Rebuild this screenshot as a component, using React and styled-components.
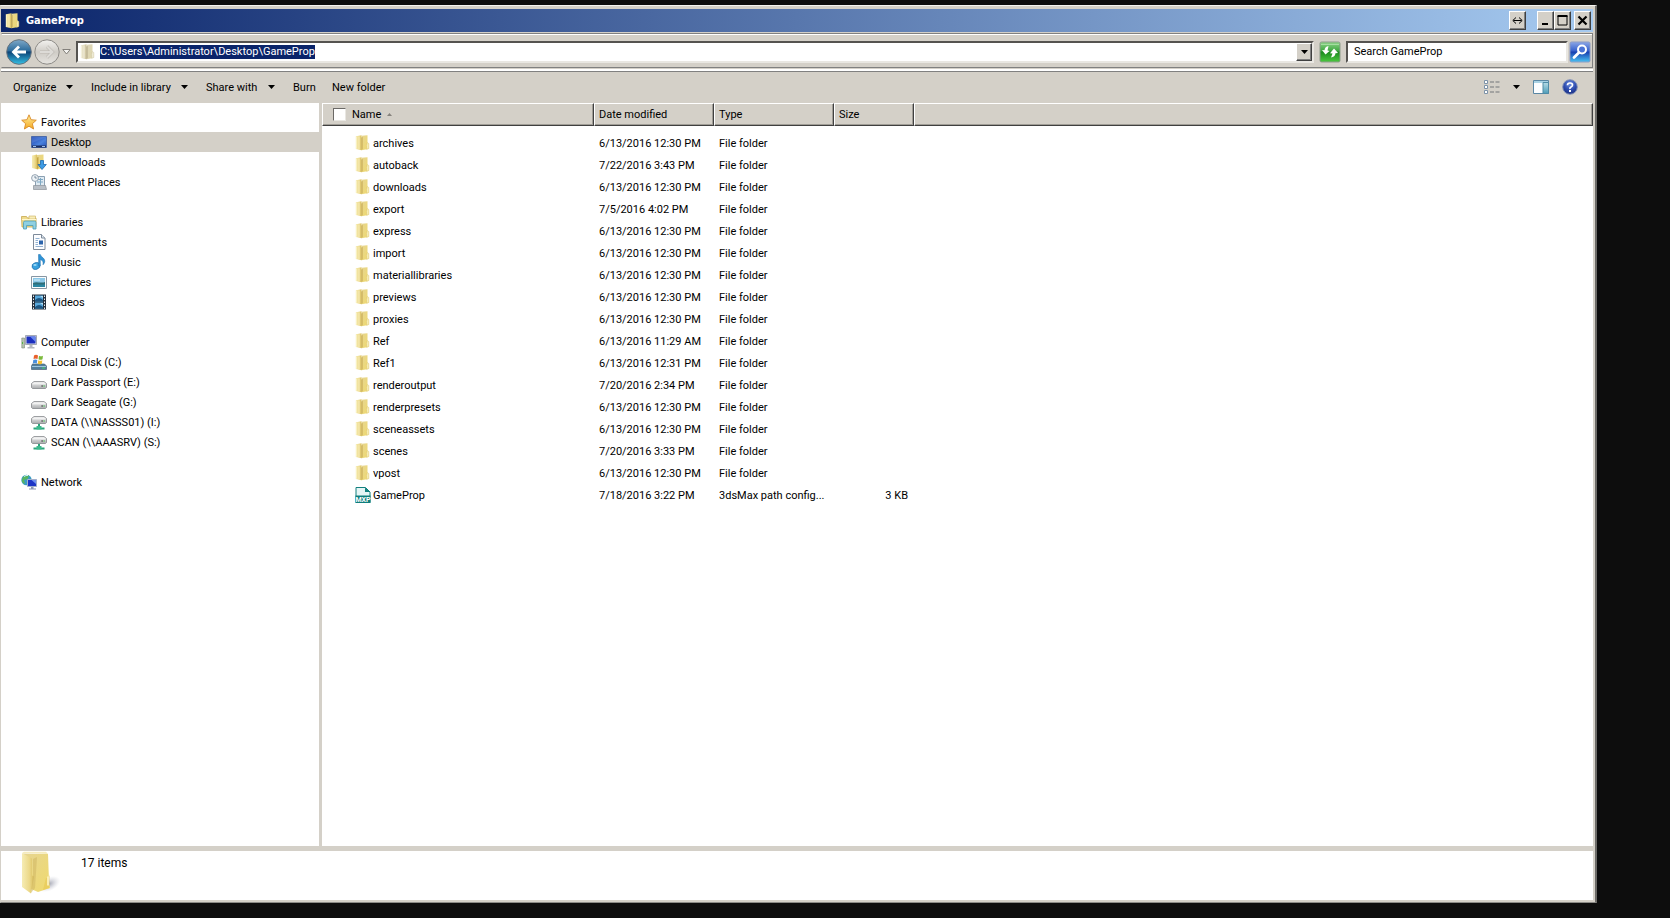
import React from "react";
import styled, { createGlobalStyle } from "styled-components";

const GlobalStyle = createGlobalStyle`
  * {
    box-sizing: border-box;
  }

  body {
    margin: 0;
    background: #0d0d0d;
  }

  body, button, input {
    font-family: Tahoma, Roboto, "Liberation Sans", sans-serif;
    font-size: 11px;
    color: #000;
  }
`;

/* ---------- icons ---------- */

const Gradients = () => (
  <HiddenSvg aria-hidden="true">
    <defs>
      <linearGradient id="flap" x1="0" x2="1" y1="0" y2="0">
        <stop offset="0" stopColor="#f6ecb4" />
        <stop offset="0.6" stopColor="#ecd98a" />
        <stop offset="1" stopColor="#d9be5c" />
      </linearGradient>
      <linearGradient id="leaf" x1="0" x2="1" y1="0" y2="1">
        <stop offset="0" stopColor="#e6d592" />
        <stop offset="1" stopColor="#f0da6c" />
      </linearGradient>
      <linearGradient id="backBlue" x1="0" x2="0" y1="0" y2="1">
        <stop offset="0" stopColor="#7fa9c8" />
        <stop offset="0.45" stopColor="#2d6c9c" />
        <stop offset="0.5" stopColor="#0c4478" />
        <stop offset="1" stopColor="#35c1e6" />
      </linearGradient>
      <linearGradient id="forwardGrey" x1="0" x2="0" y1="0" y2="1">
        <stop offset="0" stopColor="#f3f2ef" />
        <stop offset="0.5" stopColor="#cfccc6" />
        <stop offset="1" stopColor="#e6e4e0" />
      </linearGradient>
      <linearGradient id="green" x1="0" x2="0" y1="0" y2="1">
        <stop offset="0" stopColor="#8fd489" />
        <stop offset="0.45" stopColor="#3da63f" />
        <stop offset="0.5" stopColor="#1b8a1f" />
        <stop offset="1" stopColor="#4cc93f" />
      </linearGradient>
      <linearGradient id="lens" x1="0" x2="0" y1="0" y2="1">
        <stop offset="0" stopColor="#8ba6e6" />
        <stop offset="0.45" stopColor="#3560cc" />
        <stop offset="0.5" stopColor="#173fb0" />
        <stop offset="1" stopColor="#49c3f2" />
      </linearGradient>
      <linearGradient id="screen" x1="0" x2="1" y1="0" y2="1">
        <stop offset="0" stopColor="#1a3fb0" />
        <stop offset="0.6" stopColor="#4a82dd" />
        <stop offset="1" stopColor="#2350b8" />
      </linearGradient>
      <linearGradient id="drive" x1="0" x2="0" y1="0" y2="1">
        <stop offset="0" stopColor="#f5f5f5" />
        <stop offset="1" stopColor="#a9abad" />
      </linearGradient>
      <linearGradient id="star" x1="0" x2="0" y1="0" y2="1">
        <stop offset="0" stopColor="#fff0a0" />
        <stop offset="1" stopColor="#f5a81f" />
      </linearGradient>
      <linearGradient id="pane" x1="0" x2="0" y1="0" y2="1">
        <stop offset="0" stopColor="#b5dbe6" />
        <stop offset="1" stopColor="#4e9db8" />
      </linearGradient>
      <radialGradient id="help" cx="0.5" cy="0.3" r="0.7">
        <stop offset="0" stopColor="#6f8fe0" />
        <stop offset="0.6" stopColor="#2b49ac" />
        <stop offset="1" stopColor="#1b2f80" />
      </radialGradient>
      <radialGradient id="shade">
        <stop offset="0" stopColor="#8d90a0" stopOpacity="0.8" />
        <stop offset="1" stopColor="#c9cbd6" stopOpacity="0" />
      </radialGradient>
    </defs>
  </HiddenSvg>
);

const Icon = ({ size = 16, children }) => (
  <IconSvg width={size} height={size} viewBox="0 0 16 16" aria-hidden="true">
    {children}
  </IconSvg>
);

const FolderIcon = () => (
  <Icon>
    <path d="M.8 1.200 6.500.3v15L.8 14z" fill="url(#flap)" />
    <path d="M6.500.8 12.500.3v9.200l.8 1v3.500L6.500 15.300z" fill="url(#leaf)" />
    <path d="M6.300 2.500 7.600 2v12l-1.300 1.200z" fill="#c9ae54" />
    <path d="M12.300 7.500 13.800 8.500v5l-2.200.8v-4z" fill="#f8efb8" stroke="#dcc46e" strokeWidth="0.500" />
    <path d="M1.500 2v11.800M4 1.500v12.800" stroke="#faf3c8" strokeWidth="0.800" />
  </Icon>
);

const LargeFolder = () => (
  <svg width="40" height="46" viewBox="0 0 40 46" aria-hidden="true">
    <ellipse cx="28" cy="33" rx="12" ry="7" fill="url(#shade)" transform="rotate(-24 28 33)" />
    <path d="M2 2.500 27 3l1 27 1 7-12 4-7-3z" fill="url(#leaf)" />
    <path d="M1 2 11 7.500v17l2 1-3 17L1 36z" fill="url(#flap)" />
    <path d="M12 8v16l-2 18 4-5 2-31z" fill="#cdb45f" opacity="0.5" />
    <path d="M25 27c2 0 4-2 4-4l-1 14-6 2z" fill="#e6c34c" opacity="0.5" />
    <path d="M1 2 3 .8h22l2 2.200z" fill="#f5ebbd" />
    <path d="M27 25.500v9" stroke="#fff7cd" strokeWidth="1.500" />
  </svg>
);

const StarIcon = () => (
  <Icon>
    <path d="m8 .8 2.100 4.900 5.200.5-3.900 3.500 1.200 5.300L8 12.200 3.400 15l1.200-5.300L.7 6.200l5.200-.5z" fill="url(#star)" stroke="#d98a26" strokeWidth="0.900" strokeLinejoin="round" />
  </Icon>
);

const DesktopIcon = () => (
  <Icon>
    <path d="M.5 2.500h15v11H.5z" fill="url(#screen)" stroke="#4c6aa8" />
    <path d="M1 11.500h14v2H1z" fill="#1c2f60" />
    <path d="M2 12.500h3M11 12.500h3" stroke="#9fc0ec" />
    <path d="M1 3h14L1 9z" fill="#6f97e0" opacity="0.35" />
  </Icon>
);

const DownloadsIcon = () => (
  <Icon>
    <path d="M1 1.500 6 .5v14.800L1 14z" fill="url(#flap)" />
    <path d="M6 1 12.500.5V14L6 15.400z" fill="url(#leaf)" />
    <path d="M6 3.500 7.500 3v11L6 15.400z" fill="#c4a445" />
    <path d="M9.500 6.500h3v4h2.800L11 15.500l-4-5h2.500z" fill="#3d9be4" stroke="#1c68b4" strokeWidth="0.800" />
  </Icon>
);

const RecentIcon = () => (
  <Icon>
    <path d="M4.500 2.500h9v10h-9z" fill="#dfeaf2" stroke="#8ba0b2" />
    <path d="M6 5.500h6M6 8h6M9.500 4v7" stroke="#7fa9c4" />
    <path d="M2.500 11.500h12l1 4h-13z" fill="#b9bfc6" stroke="#8b929a" strokeWidth="0.700" />
    <circle cx="4" cy="4" r="3.400" fill="#eef3f7" stroke="#8a9aa8" strokeWidth="0.900" />
    <path d="M4 2v2h1.800" fill="none" stroke="#5d7488" strokeWidth="0.800" />
  </Icon>
);

const LibrariesIcon = () => (
  <Icon>
    <path d="M.5 2.500h5l1 1.500h8.500v9H1z" fill="#f0dc8c" stroke="#c7a74d" strokeWidth="0.800" />
    <path d="M8 2h6.500v3H8z" fill="#f8edb8" stroke="#cbb05c" strokeWidth="0.600" />
    <path d="M1 5.500h14" stroke="#fff6cd" />
    <path d="M2.500 15V8.500q0-1.500 1.500-1.500h9.500Q15 7 15 8.500V15h-3v-3.500H5.500V15z" fill="#8fd0e2" stroke="#4b9cb8" strokeWidth="0.800" />
  </Icon>
);

const DocumentIcon = () => (
  <Icon>
    <path d="M2.500.5h8l3.500 3.500v11.500H2.500z" fill="#fcfdff" stroke="#7d8a9a" />
    <path d="M10.500.5V4H14" fill="#dde5ee" stroke="#7d8a9a" />
    <path d="M4.500 4.500h4M4.500 6.500h2.500M4.500 8.500h2.500M4.500 10.500h2.500M4.500 12.500h7.500" stroke="#93b2d2" />
    <path d="M8 6.500h4v4H8z" fill="#2c64ac" />
  </Icon>
);

const MusicIcon = () => (
  <Icon>
    <ellipse cx="5" cy="12" rx="4" ry="3.300" fill="#38a1de" stroke="#1b6cab" strokeWidth="0.700" transform="rotate(-18 5 12)" />
    <path d="M7.500.5h1.800c.5 2.500 4.500 3.500 4.500 6.500 0 1.500-.8 2.800-1.800 3.800.6-2.800-.3-4.300-2.700-5.300v6.500H7.700z" fill="#2f93d6" stroke="#1b6cab" strokeWidth="0.500" />
    <ellipse cx="4" cy="11" rx="1.700" ry="1" fill="#9ad8f5" />
  </Icon>
);

const PicturesIcon = () => (
  <Icon>
    <path d="M.5 2.500h15v12H.5z" fill="#fafcfd" stroke="#8796a3" />
    <path d="M2 4h12v9H2z" fill="#8cc8e8" />
    <path d="M2 9c3-2 8 .5 12-1v5H2z" fill="#2f6d78" />
    <path d="M2 10.500h12v2.500H2z" fill="#2a86a2" />
    <path d="M3 6h6" stroke="#d9f0fa" />
  </Icon>
);

const VideosIcon = () => (
  <Icon>
    <path d="M1 .5h14v15H1z" fill="#25303d" />
    <path d="M4 1.500h8v6H4zM4 8.500h8v6H4z" fill="#58a8dc" />
    <path d="M4 6q4-4 8 0v1.500H4zM4 13q4-4 8 0v1.500H4z" fill="#1d5682" />
    <path d="M9 2h3v2z M9 9h3v2z" fill="#b5e1f5" />
    <path d="M2.500 1.500v14M13.500 1.500v14" stroke="#e8edf0" strokeDasharray="1.500 1.500" />
  </Icon>
);

const ComputerIcon = () => (
  <Icon>
    <path d="M.8 4h2.700v10H.8z" fill="#b4c3ad" stroke="#7c8778" strokeWidth="0.600" />
    <path d="M1.500 8v2" stroke="#55b544" />
    <path d="M4.500 1.500h11v9h-11z" fill="#dcdfe6" stroke="#9197a5" strokeWidth="0.800" />
    <path d="M5.500 2.500h9v7h-9z" fill="#1c2fc0" />
    <path d="M9 2.500h5.500V8z" fill="#6786ec" />
    <path d="M8.500 11h3v2h-3zM6.500 13h7v1.500h-7z" fill="#b3b7c0" />
  </Icon>
);

const SystemDiskIcon = () => (
  <Icon>
    <path d="M1.500 10h12l2 2v3.500H.5V12z" fill="#547f9c" stroke="#486478" strokeWidth="0.700" />
    <path d="M1 12.500h14" stroke="#9dc6df" />
    <path d="M11 14h3" stroke="#46d36b" />
    <path d="M3 1.500q2-1.500 4 0L6.500 5q-2-1-4 0z" fill="#e8602c" />
    <path d="M8 1.800q2 1 4 0L11.500 5.300q-2 1-4 0z" fill="#7cba3c" />
    <path d="M2.300 6q2-1 4 0L5.800 9.500q-2-1-4 0z" fill="#4a90dc" />
    <path d="M7.300 6.300q2 1 4 0l-.5 3.500q-2 1-4 0z" fill="#f3bd2d" />
  </Icon>
);

const DriveShape = ({ y = 0 }) => (
  <g transform={`translate(0 ${y})`}>
    <path d="M3 1.500h10l2.500 2v4l-1 1h-13l-1-1v-4z" fill="url(#drive)" stroke="#85888b" strokeWidth="0.800" />
    <path d="M1.500 3.800h13" stroke="#fff" strokeWidth="0.800" />
    <path d="M10.500 5.300h1.200v1.500h-1.200z" fill="#444" />
    <path d="M12.500 5.300h1.200v1.500h-1.200z" fill="#58c764" />
  </g>
);

const DriveIcon = () => (
  <Icon>
    <DriveShape y={6} />
  </Icon>
);

const NetDriveIcon = () => (
  <Icon>
    <DriveShape y={1} />
    <path d="M8 10v4M2.500 14.500h11" stroke="#2ba37b" strokeWidth="2" />
    <path d="M5.500 12h5v3.500h-5z" fill="#3cba8c" />
  </Icon>
);

const NetworkIcon = () => (
  <Icon>
    <circle cx="5.500" cy="6" r="5.200" fill="#3a9ac4" />
    <path d="M2 3q3-3 6-1.500L6.500 5 3 6l1 4Q.8 9 .8 6z" fill="#57b560" />
    <path d="M3 2.500q2-1.500 4-1" stroke="#cdeefa" fill="none" />
    <path d="M6.500 5.500h9v7h-9z" fill="#1d35c6" stroke="#a2b0cc" />
    <path d="M10.500 6H15v4z" fill="#6f90ee" />
    <path d="M10 13h2.500v1.500H15v1H8v-1h2z" fill="#8d98b4" />
  </Icon>
);

const MaxFileIcon = () => (
  <Icon>
    <path d="M1 .5h9.500L15 5v10.500H1z" fill="#e6f6f6" stroke="#13807f" />
    <path d="M10 .5V5h5z" fill="#13807f" />
    <path d="M.5 8.500h15V16H.5z" fill="#0f7e7d" />
    <IconLabel x="8" y="15" textAnchor="middle">
      MXP
    </IconLabel>
  </Icon>
);

const SmallArrow = () => (
  <svg width="7" height="4" viewBox="0 0 7 4" aria-hidden="true">
    <path d="M0 0h7L3.500 4z" fill="#000" />
  </svg>
);

/* ---------- data ---------- */

const places = [
  {
    title: "Favorites",
    icon: <StarIcon />,
    items: [
      { label: "Desktop", icon: <DesktopIcon />, selected: true },
      { label: "Downloads", icon: <DownloadsIcon /> },
      { label: "Recent Places", icon: <RecentIcon /> },
    ],
  },
  {
    title: "Libraries",
    icon: <LibrariesIcon />,
    items: [
      { label: "Documents", icon: <DocumentIcon /> },
      { label: "Music", icon: <MusicIcon /> },
      { label: "Pictures", icon: <PicturesIcon /> },
      { label: "Videos", icon: <VideosIcon /> },
    ],
  },
  {
    title: "Computer",
    icon: <ComputerIcon />,
    items: [
      { label: "Local Disk (C:)", icon: <SystemDiskIcon /> },
      { label: "Dark Passport (E:)", icon: <DriveIcon /> },
      { label: "Dark Seagate (G:)", icon: <DriveIcon /> },
      { label: "DATA (\\\\NASSS01) (I:)", icon: <NetDriveIcon /> },
      { label: "SCAN (\\\\AAASRV) (S:)", icon: <NetDriveIcon /> },
    ],
  },
  { title: "Network", icon: <NetworkIcon />, items: [] },
];

const files = [
  ["archives", "6/13/2016 12:30 PM"],
  ["autoback", "7/22/2016 3:43 PM"],
  ["downloads", "6/13/2016 12:30 PM"],
  ["export", "7/5/2016 4:02 PM"],
  ["express", "6/13/2016 12:30 PM"],
  ["import", "6/13/2016 12:30 PM"],
  ["materiallibraries", "6/13/2016 12:30 PM"],
  ["previews", "6/13/2016 12:30 PM"],
  ["proxies", "6/13/2016 12:30 PM"],
  ["Ref", "6/13/2016 11:29 AM"],
  ["Ref1", "6/13/2016 12:31 PM"],
  ["renderoutput", "7/20/2016 2:34 PM"],
  ["renderpresets", "6/13/2016 12:30 PM"],
  ["sceneassets", "6/13/2016 12:30 PM"],
  ["scenes", "7/20/2016 3:33 PM"],
  ["vpost", "6/13/2016 12:30 PM"],
  ["GameProp", "7/18/2016 3:22 PM", "3dsMax path config...", "3 KB"],
];

/* ---------- page ---------- */

const App = () => (
  <Screen>
    <GlobalStyle />
    <Gradients />
    <Window>
      <TitleBar>
        <FolderIcon />
        <Title>GameProp</Title>
        <CaptionButton $space={11} aria-label="Move">
          <svg width="11" height="9" viewBox="0 0 11 9">
            <path d="M4 1.500.8 4.500 4 7.500M7 1.500l3.200 3L7 7.500M1.500 4.500h8" fill="none" stroke="#000" />
          </svg>
        </CaptionButton>
        <CaptionButton aria-label="Minimize">
          <svg width="11" height="11" viewBox="0 0 11 11">
            <path d="M2 8h6v2H2z" fill="#000" />
          </svg>
        </CaptionButton>
        <CaptionButton $space={3} aria-label="Maximize">
          <svg width="11" height="11" viewBox="0 0 11 11">
            <path d="M1 1h9v9H1z" fill="none" stroke="#000" />
            <path d="M.5 1h10" stroke="#000" strokeWidth="2" />
          </svg>
        </CaptionButton>
        <CaptionButton aria-label="Close">
          <svg width="11" height="11" viewBox="0 0 11 11">
            <path d="m1.500 1.500 8 8M9.500 1.500l-8 8" stroke="#000" strokeWidth="2.200" />
          </svg>
        </CaptionButton>
      </TitleBar>

      <NavBar>
        <RoundButtons>
          <PlainButton aria-label="Back">
            <svg width="26" height="26" viewBox="0 0 26 26">
              <circle cx="13" cy="13" r="12.300" fill="url(#backBlue)" stroke="#66717c" />
              <path d="M20 13H8M13 7.500 7.500 13l5.500 5.500" fill="none" stroke="#fff" strokeWidth="2.800" />
            </svg>
          </PlainButton>
          <PlainButton aria-label="Forward">
            <svg width="26" height="26" viewBox="0 0 26 26">
              <circle cx="13" cy="13" r="12.200" fill="url(#forwardGrey)" stroke="#8c8a86" />
              <path d="M6 13h12M13 7.500l5.500 5.500-5.500 5.500" fill="none" stroke="#bdbab4" strokeWidth="3.200" />
              <path d="M6 13h12M13 7.500l5.500 5.500-5.500 5.500" fill="none" stroke="#dddbd7" strokeWidth="2" />
            </svg>
          </PlainButton>
          <PlainButton aria-label="Recent pages">
            <svg width="9" height="6" viewBox="0 0 9 6">
              <path d="M.8.5h7.400L4.500 5z" fill="#f4f3f0" stroke="#77756f" strokeWidth="0.900" />
            </svg>
          </PlainButton>
        </RoundButtons>
        <AddressBox>
          <Faded>
            <FolderIcon />
          </Faded>
          <AddressInput
            aria-label="Address"
            defaultValue="C:\Users\Administrator\Desktop\GameProp"
          />
          <DropButton aria-label="Previous locations">
            <SmallArrow />
          </DropButton>
        </AddressBox>
        <PlainButton aria-label="Refresh">
          <svg width="22" height="22" viewBox="0 0 22 22">
            <rect x="1" y="1" width="20" height="20" rx="1.500" fill="url(#green)" stroke="#8d9b8a" />
            <path d="M2 3.500h18" stroke="#c4ebbf" opacity="0.600" />
            <path d="M9.500 5 8.500 9.500l2 .5L6.500 13.500 3 9l2.500.2Q6 5.500 9.500 5z" fill="#fff" />
            <path d="M12 16.500l1.500-4-2.500-.2L15 7.500l4 4.500-2.500.2Q16 16 12 16.500z" fill="#fff" />
          </svg>
        </PlainButton>
        <SearchGroup>
          <SearchInput aria-label="Search" defaultValue="Search GameProp" />
          <PlainButton aria-label="Go">
            <svg width="22" height="22" viewBox="0 0 22 22">
              <rect x="1" y="1" width="20" height="20" rx="1.500" fill="url(#lens)" stroke="#8c9bc4" />
              <circle cx="13" cy="8.500" r="4" fill="#4b74d6" stroke="#fff" strokeWidth="2" />
              <path d="M10 11.500 5 16.500" stroke="#fff" strokeWidth="2.800" strokeLinecap="round" />
            </svg>
          </PlainButton>
        </SearchGroup>
      </NavBar>

      <Toolbar>
        <ToolButton $width={78}>
          Organize <SmallArrow />
        </ToolButton>
        <ToolButton $width={115}>
          Include in library <SmallArrow />
        </ToolButton>
        <ToolButton $width={87}>
          Share with <SmallArrow />
        </ToolButton>
        <ToolButton $width={39}>Burn</ToolButton>
        <ToolButton $width={72}>New folder</ToolButton>
        <ViewTools>
          <PlainButton aria-label="Change view">
            <svg width="16" height="14" viewBox="0 0 16 14">
              <path d="M.5.5h3v3h-3zM.5 5.500h3v3h-3zM.5 10.500h3v3h-3z" fill="#fff" stroke="#7d92a8" />
              <path d="M6 2h4M11.500 2h4M6 7h4M11.500 7h4M6 12h4M11.500 12h4" stroke="#73777b" />
            </svg>
          </PlainButton>
          <PlainButton aria-label="More views">
            <SmallArrow />
          </PlainButton>
          <PlainButton aria-label="Show the preview pane">
            <svg width="16" height="14" viewBox="0 0 16 14">
              <path d="M.5.5h15v13H.5z" fill="#fbfdff" stroke="#5a87a4" />
              <path d="M1 1h14v2H1z" fill="#a9d2e4" />
              <path d="M10 2.500h5.500v11H10z" fill="url(#pane)" stroke="#4f8ba6" />
            </svg>
          </PlainButton>
          <PlainButton aria-label="Get help">
            <svg width="16" height="16" viewBox="0 0 16 16">
              <circle cx="8" cy="8" r="7.300" fill="url(#help)" stroke="#8493b8" />
              <path d="M5.500 6.200Q5.500 4 8 4t2.500 2Q10.500 7.300 9 8T8 10" fill="none" stroke="#fff" strokeWidth="1.700" />
              <path d="M7 11h2v2H7z" fill="#fff" />
            </svg>
          </PlainButton>
        </ViewTools>
      </Toolbar>

      <Panes>
        <Sidebar>
          {places.map((group) => (
            <Group key={group.title}>
              <Place href="#" $top>
                {group.icon}
                {group.title}
              </Place>
              {group.items.map((item) => (
                <Place href="#" key={item.label} $selected={item.selected}>
                  {item.icon}
                  {item.label}
                </Place>
              ))}
            </Group>
          ))}
        </Sidebar>

        <FileArea>
          <FileTable>
            <colgroup>
              <Col $width={272} />
              <Col $width={120} />
              <Col $width={120} />
              <Col $width={80} />
              <col />
            </colgroup>
            <thead>
              <tr>
                <HeadCell>
                  <NameHead>
                    <CheckAll type="checkbox" aria-label="Select all" />
                    Name
                    <svg width="5" height="3" viewBox="0 0 5 3">
                      <path d="M2.500 0 5 3H0z" fill="#85827c" />
                    </svg>
                  </NameHead>
                </HeadCell>
                <HeadCell>Date modified</HeadCell>
                <HeadCell>Type</HeadCell>
                <HeadCell>Size</HeadCell>
                <HeadCell aria-label="Empty" />
              </tr>
            </thead>
            <FileRows>
              {files.map(([name, date, type, size]) => (
                <tr key={name}>
                  <Cell>
                    <FileName>
                      {type ? <MaxFileIcon /> : <FolderIcon />}
                      {name}
                    </FileName>
                  </Cell>
                  <Cell>{date}</Cell>
                  <Cell>{type || "File folder"}</Cell>
                  <Cell $right>{size}</Cell>
                  <Cell />
                </tr>
              ))}
            </FileRows>
          </FileTable>
        </FileArea>
      </Panes>

      <StatusBar>
        <LargeFolder />
        <StatusText>17 items</StatusText>
      </StatusBar>
    </Window>
  </Screen>
);

const HiddenSvg = styled.svg`
  position: absolute;
  width: 0;
  height: 0;
`;

const IconSvg = styled.svg`
  flex: none;
  display: block;
`;

const IconLabel = styled.text`
  fill: #fff;
  font-size: 7px;
  font-weight: 700;
`;

const Screen = styled.div`
  display: flex;
  min-height: 100vh;
  padding: 5px 73px 15px 0;
`;

const Window = styled.div`
  flex: 1;
  display: flex;
  flex-direction: column;
  min-width: 0;
  padding: 3px 2px 2px 0;
  background: #d4d0c8;
  border: 1px solid #d4d0c8;
  border-top-color: #f5f4f1;
  border-right: 2px solid #6c6b68;
  border-bottom-color: #8b8a86;
`;

const TitleBar = styled.header`
  display: flex;
  align-items: center;
  height: 23px;
  padding: 0 2px 0 4px;
  background: linear-gradient(90deg, #0a246a, #a6caf0);
`;

const Title = styled.h1`
  flex: 1;
  margin: 0 0 0 5px;
  color: #fff;
  font-family: "DejaVu Sans Condensed", "DejaVu Sans", sans-serif;
  font-size: 11px;
  font-weight: 700;
`;

const CaptionButton = styled.button`
  display: flex;
  align-items: center;
  justify-content: center;
  width: 17px;
  height: 19px;
  margin-right: ${({ $space }) => $space || 0}px;
  padding: 0;
  background: #d4d0c8;
  border: 1px solid;
  border-color: #fff #404040 #404040 #fff;
  box-shadow: inset -1px -1px #808080;
`;

const PlainButton = styled.button`
  display: flex;
  padding: 0;
  border: none;
  background: none;
`;

const NavBar = styled.div`
  display: flex;
  align-items: center;
  gap: 5px;
  height: 35px;
  margin-top: 1px;
  padding: 2px 1px 0 4px;
  border: 1px solid #808080;
  border-left-color: #d4d0c8;
  box-shadow: inset 0 1px #fff;
`;

const RoundButtons = styled.div`
  display: flex;
  align-items: center;
  gap: 2px;
`;

const AddressBox = styled.div`
  flex: 1;
  display: flex;
  align-items: center;
  height: 22px;
  padding-left: 2px;
  background: #fff;
  border: 2px solid;
  border-color: #555350 #e9e7e2 #e9e7e2 #555350;
`;

const Faded = styled.span`
  filter: grayscale(0.6);
`;

const AddressInput = styled.input`
  field-sizing: content;
  height: 14px;
  margin-left: 4px;
  padding: 0;
  border: none;
  outline: none;
  background: #0a246a;
  color: #fff;
`;

const DropButton = styled(CaptionButton)`
  width: 16px;
  height: 18px;
  margin-left: auto;
`;

const SearchGroup = styled.div`
  display: flex;
  align-items: center;
  gap: 1px;
`;

const SearchInput = styled.input`
  width: 222px;
  height: 22px;
  padding: 0 6px;
  border: 2px solid;
  border-color: #555350 #e9e7e2 #e9e7e2 #555350;
  background: #fff;
  outline: none;
`;

const Toolbar = styled.div`
  display: flex;
  align-items: center;
  height: 34px;
  margin-top: 1px;
  padding: 0 15px 0 3px;
  border-top: 2px solid #fff;
  box-shadow: inset 0 1px #808080;
`;

const ToolButton = styled.button`
  display: flex;
  align-items: center;
  justify-content: space-between;
  width: ${({ $width }) => $width}px;
  padding: 0 9px;
  border: none;
  background: none;
  white-space: nowrap;
`;

const ViewTools = styled.div`
  display: flex;
  align-items: center;
  gap: 13px;
  margin-left: auto;
`;

const Panes = styled.main`
  flex: 1;
  display: flex;
`;

const Sidebar = styled.nav`
  flex: none;
  width: 321px;
  padding-top: 9px;
  background: #fff;
  border-right: 3px solid #d4d0c8;
`;

const Group = styled.div`
  margin-bottom: 20px;
`;

const Place = styled.a`
  display: flex;
  align-items: center;
  gap: 4px;
  height: 20px;
  padding-left: ${({ $top }) => ($top ? 20 : 30)}px;
  background: ${({ $selected }) => ($selected ? "#d4d0c8" : "transparent")};
  color: #000;
  text-decoration: none;
`;

const FileArea = styled.section`
  flex: 1;
  background: #fff;
`;

const FileTable = styled.table`
  width: 100%;
  table-layout: fixed;
  border-collapse: separate;
  border-spacing: 0;
`;

const Col = styled.col`
  width: ${({ $width }) => $width}px;
`;

const HeadCell = styled.th`
  height: 23px;
  padding: 0 4px;
  background: #d4d0c8;
  border: 1px solid;
  border-color: #fff #404040 #404040 #fff;
  box-shadow: inset -1px -1px #a09d96;
  font-weight: 400;
  text-align: left;
`;

const NameHead = styled.div`
  display: flex;
  align-items: center;
  gap: 6px;
  padding-left: 6px;
`;

const CheckAll = styled.input`
  appearance: none;
  width: 13px;
  height: 13px;
  margin: 0;
  background: #fff;
  border: 1px solid;
  border-color: #6b6966 #e9e7e2 #e9e7e2 #6b6966;
`;

const FileRows = styled.tbody`
  &::before {
    content: "";
    display: block;
    height: 6px;
  }
`;

const Cell = styled.td`
  height: 22px;
  padding: 0 5px;
  padding-right: ${({ $right }) => ($right ? 6 : 0)}px;
  text-align: ${({ $right }) => ($right ? "right" : "left")};
  white-space: nowrap;
`;

const FileName = styled.div`
  display: flex;
  align-items: center;
  gap: 2px;
  padding-left: 28px;
`;

const StatusBar = styled.footer`
  display: flex;
  height: 54px;
  padding-left: 20px;
  gap: 20px;
  background: #fff;
  border-top: 5px solid #d4d0c8;
`;

const StatusText = styled.p`
  margin: 5px 0 0;
  font-size: 12px;
`;

export default App;
